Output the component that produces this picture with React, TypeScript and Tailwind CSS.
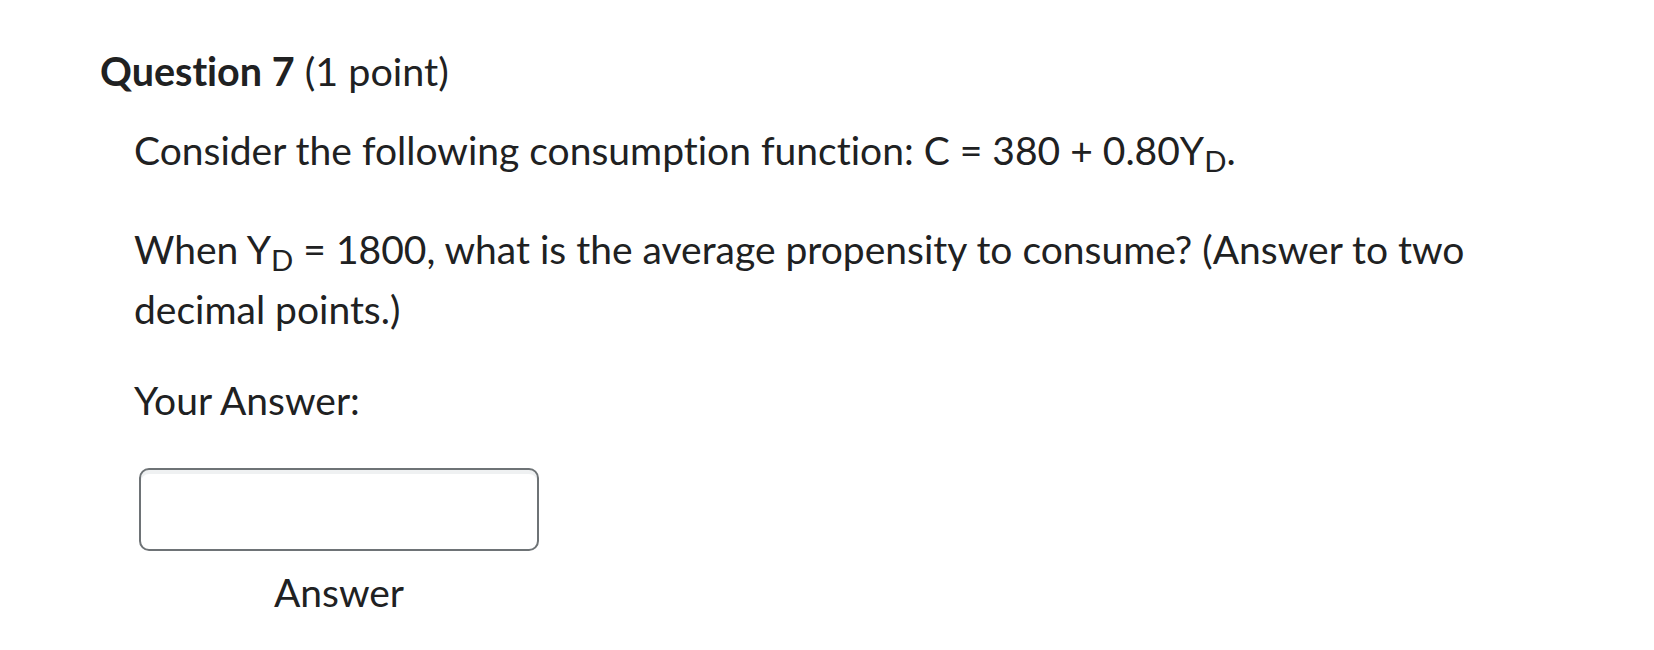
export default function App() {
  return (
    <div className="min-h-[650px] bg-white text-[#202122] font-['Lato',sans-serif] [font-variant-ligatures:none] pl-[100px] pt-[48px]">
      <h2 className="text-[39.5px] leading-[46px]">
        <span className="font-bold">Question 7</span> (1 point)
      </h2>

      <div className="pl-[34px] w-[1440px] text-[39px] leading-[60px]">
        <p className="mt-[26px]">
          Consider the following consumption function: C = 380 + 0.80Y<sub>D</sub>.
        </p>
        <p className="mt-[39px]">
          When Y<sub>D</sub> = 1800, what is the average propensity to consume? (Answer to two decimal points.)
        </p>

        <label htmlFor="answer" className="block mt-[31px]">
          Your Answer:
        </label>

        <div className="ml-[5px] mt-[38px] w-[400px]">
          <input
            id="answer"
            type="text"
            className="block w-[400px] h-[83px] rounded-[10px] border-2 border-[#6e7376] bg-white shadow-[inset_0_4px_0_0_rgba(177,185,190,0.2)] outline-none px-4"
          />
          <div className="mt-[11px] text-center">Answer</div>
        </div>
      </div>
    </div>
  );
}
